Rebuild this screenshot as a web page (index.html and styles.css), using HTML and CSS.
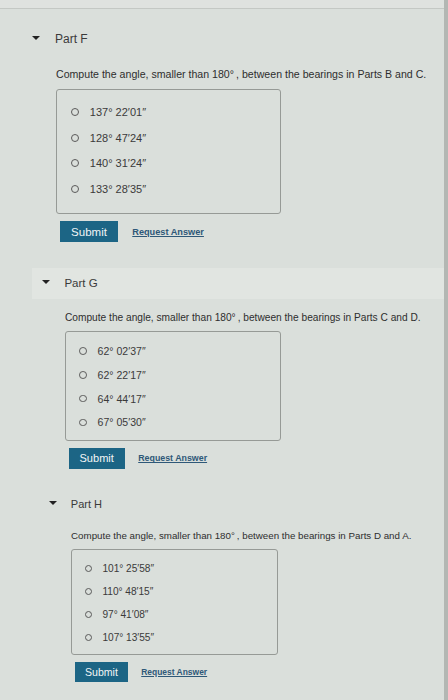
FILE: index.html
```html
<!DOCTYPE html>
<html lang="en">
<head>
    <meta charset="UTF-8">
    <meta name="viewport" content="width=device-width, initial-scale=1.0">
    <title>Parts F-H</title>
    <link rel="stylesheet" href="styles.css">
</head>
<body>
    <div class="page">
        <div class="topbar"></div>

        <section class="part part-f">
            <div class="part-head">
                <span class="caret"></span>
                <span class="part-title">Part F</span>
            </div>
            <div class="part-body">
                <p class="question">Compute the angle, smaller than 180°&#8201;, between the bearings in Parts B and C.</p>
                <div class="choices">
                    <label class="choice"><span class="radio"></span><span class="choice-text">137° 22′01″</span></label>
                    <label class="choice"><span class="radio"></span><span class="choice-text">128° 47′24″</span></label>
                    <label class="choice"><span class="radio"></span><span class="choice-text">140° 31′24″</span></label>
                    <label class="choice"><span class="radio"></span><span class="choice-text">133° 28′35″</span></label>
                </div>
                <div class="actions">
                    <button type="button" class="submit"><span class="submit-label">Submit</span></button>
                    <a href="#" class="request">Request Answer</a>
                </div>
            </div>
        </section>

        <section class="part part-g">
            <div class="part-head">
                <span class="caret"></span>
                <span class="part-title">Part G</span>
            </div>
            <div class="part-body">
                <p class="question">Compute the angle, smaller than 180°&#8201;, between the bearings in Parts C and D.</p>
                <div class="choices">
                    <label class="choice"><span class="radio"></span><span class="choice-text">62° 02′37″</span></label>
                    <label class="choice"><span class="radio"></span><span class="choice-text">62° 22′17″</span></label>
                    <label class="choice"><span class="radio"></span><span class="choice-text">64° 44′17″</span></label>
                    <label class="choice"><span class="radio"></span><span class="choice-text">67° 05′30″</span></label>
                </div>
                <div class="actions">
                    <button type="button" class="submit"><span class="submit-label">Submit</span></button>
                    <a href="#" class="request">Request Answer</a>
                </div>
            </div>
        </section>

        <section class="part part-h">
            <div class="part-head">
                <span class="caret"></span>
                <span class="part-title">Part H</span>
            </div>
            <div class="part-body">
                <p class="question">Compute the angle, smaller than 180°&#8201;, between the bearings in Parts D and A.</p>
                <div class="choices">
                    <label class="choice"><span class="radio"></span><span class="choice-text">101° 25′58″</span></label>
                    <label class="choice"><span class="radio"></span><span class="choice-text">110° 48′15″</span></label>
                    <label class="choice"><span class="radio"></span><span class="choice-text">97° 41′08″</span></label>
                    <label class="choice"><span class="radio"></span><span class="choice-text">107° 13′55″</span></label>
                </div>
                <div class="actions">
                    <button type="button" class="submit"><span class="submit-label">Submit</span></button>
                    <a href="#" class="request">Request Answer</a>
                </div>
            </div>
        </section>
    </div>
</body>
</html>
```

FILE: styles.css
```css
body {
    margin: 0;
    background-color: #dadfdb;
    font-family: "Liberation Sans", Arial, sans-serif;
    color: #333;
}
.page {
    height: 700px;
    overflow: hidden;
    border-right: 4px solid #b3b7b3;
    box-sizing: border-box;
}
.topbar {
    height: 8px;
    background-color: #dfe2df;
    border-bottom: 1px solid #c4c8c4;
}
.part {
    padding: 1.4em 0 1.2em;
}
.part-f {
    font-size: 10px;
    padding-left: 32px;
}
.part-g {
    font-size: 9.6px;
    padding-left: 42px;
    padding-bottom: 0.8em;
}
.part-h {
    font-size: 9.2px;
    padding-left: 49px;
}
.part-head {
    display: flex;
    align-items: center;
    height: 3.2em;
}
.part-g .part-head {
    background-color: #e1e5e1;
    margin-left: -1em;
    padding-left: 1em;
}
.caret {
    width: 0;
    height: 0;
    border-left: 0.45em solid transparent;
    border-right: 0.45em solid transparent;
    border-top: 0.45em solid #222;
    margin-right: 1.5em;
    margin-top: -0.2em;
}
.part-title {
    font-size: 1.2em;
    color: #3a3a3a;
}
.part-body {
    margin-left: 2.4em;
}
.question {
    margin: 1.2em 0 0;
    line-height: 1.3em;
    font-size: 1.06em;
    color: #2e2e2e;
}
.choices {
    width: 22.3em;
    margin-top: 0.7em;
    padding: 0.75em 0 0.6em;
    border: 1px solid #969a96;
    border-radius: 3px;
}
.part-f .choices {
    padding: 1em 0 1.1em;
}
.choice {
    display: flex;
    align-items: center;
    height: 2.49em;
    padding-left: 1.38em;
    color: #3a3a3a;
}
.part-f .choice {
    height: 2.56em;
}
.choice-text {
    font-size: 1.1em;
}
.radio {
    width: 0.6em;
    height: 0.6em;
    border: 1.5px solid #5a5a5a;
    border-radius: 50%;
    margin-right: 1.1em;
    flex-shrink: 0;
}
.actions {
    display: flex;
    align-items: center;
    margin-top: 0.75em;
    padding-left: 0.4em;
}
.submit {
    width: 5.8em;
    height: 2.1em;
    padding: 0;
    border: none;
    background-color: #1c6585;
    color: #f2f5f6;
    font-family: "Liberation Sans", Arial, sans-serif;
    font-size: 1em;
}
.submit-label {
    font-size: 1.15em;
}
.request {
    margin-left: 1.55em;
    font-size: 0.92em;
    font-weight: bold;
    color: #2e5878;
}
```
